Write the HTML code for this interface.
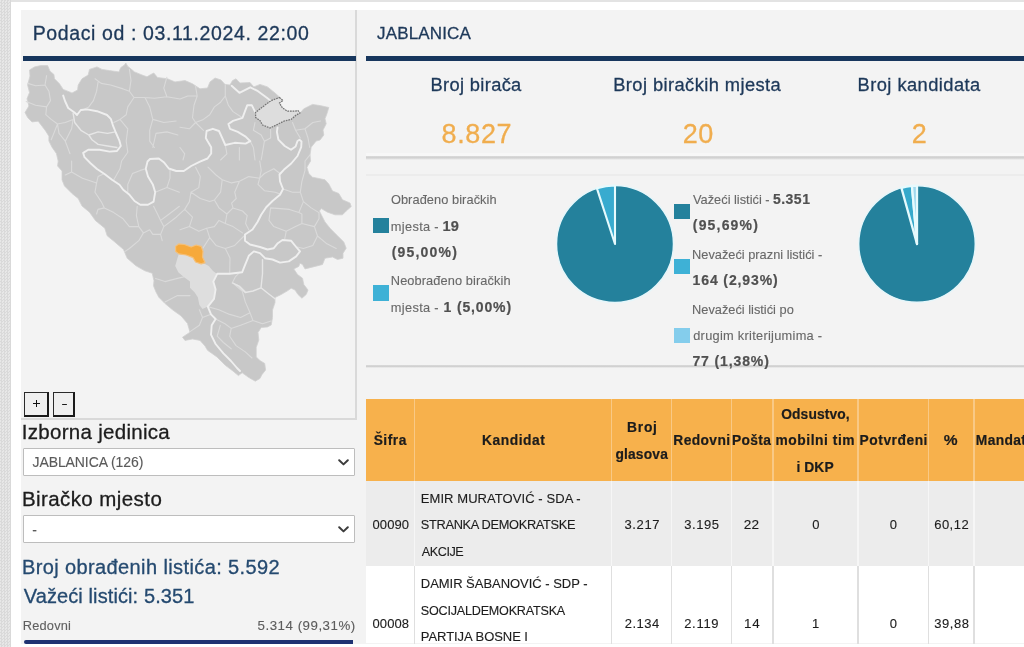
<!DOCTYPE html>
<html>
<head>
<meta charset="utf-8">
<title>Izbori - JABLANICA</title>
<style>
html,body{margin:0;padding:0;}
body{width:1024px;height:647px;overflow:hidden;position:relative;background:#e3e3e3;font-family:"Liberation Sans",sans-serif;}
.abs{position:absolute;}
.t{position:absolute;white-space:nowrap;line-height:1;font-family:"Liberation Sans",sans-serif;}
.sq{position:absolute;width:15.5px;height:15.2px;}
.btn{position:absolute;box-sizing:border-box;background:#efefef;border-style:solid;border-color:#2a2a2a #1a1a1a #1a1a1a #2a2a2a;border-width:1.6px 2.2px 2.4px 1.6px;}
.sel{position:absolute;box-sizing:border-box;left:23.2px;width:332px;background:#fff;border:1px solid #bdbdbd;border-radius:1px;}
</style>
</head>
<body>
<div class="abs" style="left:0;top:0;width:11.2px;height:647px;background:repeating-conic-gradient(#d9d9d9 0% 25%,#e7e7e7 0% 50%) 0 0/3px 3px;"></div>
<div class="abs" style="left:11.2px;top:1.5px;width:1013px;height:646px;background:#fff;"></div>
<div class="abs" style="left:20.6px;top:10.4px;width:1004px;height:633.2px;background:#f3f3f3;"></div>
<!-- left card border (right + bottom) -->
<div class="abs" style="left:354.9px;top:10.4px;width:2.3px;height:409.4px;background:#d9d9d9;"></div>
<div class="abs" style="left:20.6px;top:417.7px;width:336.6px;height:2.2px;background:#d9d9d9;"></div>
<div class="abs" style="left:23px;top:56.4px;width:332.5px;height:4.2px;background:#17365d;"></div>
<svg class="abs" style="left:20px;top:60px;filter:blur(0.45px);" width="334" height="357" viewBox="20 60 334 357">
<path d="M29.5,70 L34.5,66.9 L40.8,65.6 L47.6,65.6 L50,71.2 L53.9,74.4 L54.5,78.8 L59.5,83.8 L63.2,89.4 L69.5,91.9 L72,93 L77.6,90 L78.2,85 L82,78.8 L88.2,75 L89.5,69.4 L97,66.9 L102,69.4 L109.5,70.6 L118.9,71.9 L120.8,67.5 L124.5,65 L125.8,63 L127.6,66.2 L130.8,68.8 L134.5,71.9 L142,75 L147,76.8 L150,75 L153.8,73 L157.5,77.5 L167.5,78.8 L175,81.9 L185,80.6 L192.5,83.8 L200,88.8 L207.5,88 L210,81.9 L215,78 L221,80 L225,84.4 L230,85 L232.5,80.6 L236,78.8 L240,83 L250,82.5 L253.8,86.9 L260,84.4 L267.5,86.9 L275,93 L279.4,96.9 L283,100.6 L279.4,103 L282.5,108 L287.5,111.2 L295,111.2 L298,110.6 L300,113 L303.8,108.8 L312.5,104.4 L320,105.6 L328.8,107.5 L326.9,113.8 L325,118.8 L326.2,123.8 L323,130 L323.8,135 L320,140 L316.2,141 L311.2,147.2 L310,154.8 L310.6,161 L306.9,167.2 L308.8,173.5 L312.5,177.2 L318.8,178.5 L325,179.8 L328.8,184 L332.5,191 L338.8,193.5 L342.5,199.8 L350,203 L351.2,206.6 L346.2,211 L342.5,214.8 L335,214.8 L327.5,212.2 L321.2,208.5 L319.4,211 L321.9,216 L325,222 L330,228.2 L336.2,234.5 L343.8,242 L346.2,248.2 L343,253.2 L343,258.2 L337.5,259.5 L332.5,257 L325,258.2 L322.5,264.5 L315,266.4 L305,268.9 L302.5,264.5 L300,263.2 L298.8,266.4 L293.8,268.9 L297.5,274.5 L302.5,278.2 L303.8,284.5 L308,290 L306.2,294.5 L301.9,298.2 L298,294.5 L295,290 L291.2,288.2 L287.5,290.8 L281.2,294.5 L275,297.5 L275,302.5 L272.5,310 L272.5,317.5 L271.2,325 L267.5,326.9 L261.2,327.5 L258,332.5 L258.8,340 L256.2,347.5 L256.2,356.9 L260,360.6 L264.7,363.4 L265.6,370 L261.9,374.7 L260,378.4 L255.3,381.2 L248.8,377.5 L242.2,372.8 L238.4,375.6 L232.8,370.9 L225.3,365.3 L216.9,356.9 L207.5,350.3 L205,346 L200,340.4 L192.5,339 L185,340.4 L182.5,337.2 L190,332.2 L187.5,323.5 L181.2,316 L172.5,309.8 L165,303.5 L158.8,297.2 L156,292 L153.5,285.8 L154,280.8 L152.2,273.2 L144.8,270.8 L136,265.8 L127.2,258.2 L123.5,249.5 L114.8,242 L107.2,235.8 L104.8,228.2 L97.2,222 L95.8,221 L89.5,212.2 L82,206 L78.2,198.5 L72,193.5 L64.5,186 L62,179.8 L62,171 L57.6,166 L58.2,161 L56.4,153.5 L52,147.2 L48.9,141 L48.9,136.2 L45.8,131.2 L42,126.2 L38.2,121.2 L32,121.9 L27.6,117.5 L25,112.5 L28.9,106 L27,98.8 L29.5,92.5 L27.6,85 L30,76Z" fill="#c8c8c8" stroke="#d0d0d0" stroke-width="0.8" stroke-linejoin="round"/>
<path d="M46.6,75.6 L45,85 L48.9,91.2 L50.5,100.6 L46.6,106.9 L45.8,114.7 L51.2,119.4 L57.5,124 L54.4,131.9 L51.2,139.7 M27.8,83.4 L35.6,85.8 L45,85 M26.2,101.4 L35.6,105.3 L46.6,106.9 M57.5,124 L65.3,122.5 L73.1,119.4 M98.1,81.9 L96.6,91.2 L93.4,100.6 L88.8,106.9 L82.5,110 M95,78.8 L101.2,83.4 L110.6,85 L123.1,88.9 L129.4,91.2 L134,97.5 L145,97.5 L154.4,98.3 L166.9,96.7 L180,99 L187.8,96 L197.2,96 M129.4,69.4 L131,80.3 L129.4,91.2 M134,97.5 L127.8,106.9 L126.2,114.7 L120,119.4 L113.8,122.5 M166.9,77.2 L163.8,88.1 L166.9,96.7 M145,97.5 L149.7,106.9 L152.8,119.4 L149.7,130.3 L149.7,141.2 L154.4,147.5 M120,119.4 L127.8,128.8 L126.2,141.2 L127.8,152.2 M152.8,119.4 L163.8,122.5 L176.2,121 M156,133.4 L166.9,131.9 L177.8,135 M156,133.4 L152.8,147.5 M57.5,124 L59,133.4 L65.3,141.2 L70,153.8 M73.1,119.4 L71.6,128.8 L65.3,141.2 M195.6,86.6 L197.2,96 L194,105.3 L192.5,117.8 L195.6,122.5 L203.4,130.3 M225.3,96 L220.6,102.2 L214.4,106.9 L209.7,114.7 L203.4,119.4 L195.6,122.5 M225.3,85 L225.3,96 L228.4,105.3 L233,111.6 L242.5,117.8 M180,127.2 L189.4,128.8 L195.6,122.5 M255,122.5 L253.4,130.3 L261.2,135 L264.4,141.2 L262.8,150.6 L261.2,160 M270.6,128.8 L270.6,138 L264.4,141.2 M292.5,122.5 L295.6,130.3 L300.3,138 M295.6,130.3 L305,128.8 L312.8,122.5 L320.6,121 M305,128.8 L308,138 L309.7,147.5 M239.4,147.5 L239.4,160 M250.3,141.2 L253.4,147.5 L255,160 M225.3,145 L226.9,153.8 L220.6,160 M180,147.5 L184.7,153.8 L183,160 M71.6,161 L71.6,172 L65.3,175 M71.6,172 L82.5,178.2 L96.6,182.9 L98.1,176.6 L104.4,173.5 M96.6,182.9 L95,192.2 L101.2,201.6 L104.4,207.9 L98,209.4 L96.6,214 M104.4,207.9 L113.8,212.6 L123.1,218.8 L129.4,226.6 L138.8,226.6 L143.4,232.9 L138.8,240.7 L129.4,248.5 L124.7,251.6 M137.2,206.3 L136.4,215.7 L138.8,226.6 M153.6,206.3 L157.5,214 L160.6,220.4 L166.9,215.7 L179.4,206.3 M160.6,220.4 L163.8,226.6 L160.6,234.4 L162.2,240.7 M143.4,232.9 L149.7,229.8 L152.8,234.4 L160.6,234.4 M132.5,173.5 L127.8,184.4 L127.8,192.2 M132.5,173.5 L140.3,170.4 L145.8,168.8 M155.2,192.2 L166.9,187.6 L179.4,192.2 M166.9,187.6 L170,178.2 L170,168.8 M163.8,226.6 L176.2,217.2 L184.7,209.4 M121.6,161 L120,168.8 L113.8,179.8 M127.8,152.2 L121.6,161 M195.6,167.2 L200.3,176.6 L198.8,187.6 L191,192.2 L189.4,201.6 L184.7,209.4 L192.5,217.2 L189.4,226.6 L180,229.8 M208,167.2 L216,175 L222.2,179.8 L220.6,192.2 L214.4,200 L209.7,201.6 L200.3,198.5 L191,192.2 M222.2,179.8 L231.6,182.9 L239.4,181.3 L248.8,176.6 L259.7,178.2 L264.4,173.5 L273.8,168.8 L280,173.5 M259.7,161 L261.2,170.4 L259.7,178.2 L258,184.4 L264.4,190.7 L275.3,192.2 L280,194 M239.4,181.3 L234.7,192.2 L236.2,198.5 L231.6,203.2 L233,207.9 L242.5,211 L247.2,215.7 L245.6,223.5 L248.8,229.8 M214.4,200 L219,207.9 L226.9,214 L233,207.9 M226.9,214 L225.3,223.5 L219,220.4 L214.4,226.6 L206.6,228.2 L198.8,231.3 L189.4,226.6 M225.3,223.5 L233,226.6 L242.5,232.9 M206.6,228.2 L209.7,237.6 L216,245.4 L225.3,248.5 L234.7,245.4 L244,236 M225.3,248.5 L230,257.9 L229.7,273 M203,248 L209.7,237.6 M305,161 L305,170.4 L301.9,181.3 L300.3,192.2 L303.4,201.6 L311.2,207.9 L319,212.6 M283,189 L292.5,192.2 L300.3,192.2 M289.4,209.4 L298.8,212.6 L303.4,201.6 M289.4,209.4 L270.6,207.9 L269,220.4 L273.8,226.6 L286.2,231.3 L295.6,226.6 L301.9,223.5 L301.9,214 L298.8,212.6 M301.9,223.5 L314.4,226.6 L319,218.8 L319,212.6 M314.4,226.6 L317.5,236 L312.8,245.4 L303.4,248.5 L297.2,247 M286.2,231.3 L284.7,239 M317.5,236 L326.9,243.8 L336.2,248.5 M310,154.8 L305,161 M155.6,278.4 L165,281.6 L177.5,278.4 L183.8,276.9 M165,301.9 L177.5,295.6 L190,295.6 M199.4,309.7 L202.5,317.5 L199.4,325.3 L190,331.6 M202.5,317.5 L210.3,314.4 M232.2,283 L240,286.2 L246.2,292.5 M232.2,283 L235.3,276.9 L240,272.2 M232.8,283 L242.2,291 L245.3,301.9 L250,312.8 L253,320.6 L262.5,323.8 L271,321 M207.8,306.6 L218.8,309.7 L229.7,314.4 L240.6,317.5 L250,312.8 M215.6,319 L225,323.8 L231.2,328.4 L229.7,336.2 L236,345.6 L245.3,351.9 L252,358 M231.2,328.4 L240.6,325.3 L253,320.6 M220.3,325.3 L217.2,336.2 L223.4,342.5 L231.2,348.8" fill="none" stroke="#dadada" stroke-width="1.1" stroke-linejoin="round" stroke-linecap="round"/>
<path d="M175.2,266 L177.5,258 L178.8,253.9 L186.2,255 L193,257.6 L195.6,262 L201.2,263.9 L205,263.9 L208.8,266 L213,271 L216.8,273.8 L213.3,281.6 L215.6,289.4 L214,298.8 L207.8,306.6 L202.5,309 L199.4,305 L197.8,297.2 L194.7,292.5 L190,287.8 L190,281.6 L183.8,276.9 L178.3,272.2Z" fill="#dedede"/>
<path d="M73.1,113.1 L74.7,122.5 L80.9,130.3 L88.8,135 L91.9,139.7 L98.1,144.4 L107.5,146 L116.9,147.5 M88.8,135 L98.1,131.9 L107.5,133.4 L115.3,131.9 M262.5,259.7 L262.5,273.8 L261,287.8 L253,291 L245.3,292.5 L239,286.2 L232.8,283 M261,287.8 L268.8,294 L275,298.8" fill="none" stroke="#e6e6e6" stroke-width="1.4" stroke-linejoin="round" stroke-linecap="round"/>
<path d="M63.2,95.6 L65,101 L68.2,108 L74.5,112.5 L77,115 L80.8,110 L87,109.4 L97,111.2 L107,115 L110.8,118.8 L113.2,126.2 L115.8,132.5 L119.5,140.9 L120.8,146 L117,151 L109.5,151.6 L99.5,149.8 L88.2,149.8 L83.2,152.9 L84.5,157.2 L90.8,163.5 L97,169 L104.5,174 L112,179.8 L119.5,184.8 L123.2,189.8 L129.5,194.8 L134.5,201 L140.3,204.8 L148,204.8 L153.6,201.6 L155.2,192.2 L152.8,184.4 L148,176.6 L145.8,168.8 L147.5,161.5 L150,159 L158.8,158.5 L163.8,162.2 L168.8,168.5 L176.2,171 L183.8,171 L191.2,166 L200,161.6 L207.5,158.5 L211.2,153.5 L211.2,147.2 L207.5,141 L205.8,138 L206.6,131 L212.8,128.8 L219,131 L222.2,138 L225.3,145 L234.7,142.8 L245.6,143.6 L250.3,141.2 L245.6,136.6 L237.8,131.9 L230,128.8 L228.4,124 L233,120.9 L242.5,117.8 L244.8,111.6 L247.2,105.3 L251.9,105.3 L255,111.6 M231.6,85.8 L239.4,92.8 L250.3,87.3 L258,91.2 L267.5,98.3 L271.4,101.4 M277.5,127.5 L276.9,131.9 L278.4,139.7 L284.7,146 L291,149.8 L295.6,146.5 L297.5,141 L299.5,139.8 L301.5,141.5 L301.2,147.2 L297.5,156 L291.2,163.5 L283.8,169.8 L279.5,174.5 L280,181.3 L283,189 L280,194.8 L272.5,201 L266.2,207.2 L261.2,214.8 L257.5,222 L252.5,229.5 L245,234.5 L245,240.8 L250,244.5 L260,247 L267.5,249.5 L273.8,248.2 L277.8,243.2 L282.5,240 L291.2,240.8 L296.2,247 L300,251.4 L296.2,256.4 L288.8,261.4 L280,262.6 L272.5,259.5 L265,258.2 L260,253.2 L253.8,251.4 L248.8,255.8 L245.3,264.4 L242.2,272.2 L229.7,273.8 L217.2,273.8 L213.3,281.6 L215.6,289.4 L214,298.8 L207.8,306.6 L211,314.4 L215.6,319 L211.7,325.3 L211,334.7 L215.6,344 L223.4,353.4 L231,361 L237,368 L240,371" fill="none" stroke="#efefef" stroke-width="1.9" stroke-linejoin="round" stroke-linecap="round"/>
<path d="M175.6,246.4 L178.8,243.9 L184.4,244.5 L191.2,247 L196.2,245 L201.2,246.4 L203,251.4 L202.5,257 L205,262.6 L201.2,263.9 L195.6,262 L193,257.6 L186.2,255 L178.8,253.9 L175.6,251.4Z" fill="#f6a93b" stroke="#f5c07a" stroke-width="1.2" stroke-linejoin="round"/>
<path d="M279.4,97.5 L283,100.6 L279.4,103 L282.5,108 L287.5,111.2 L295,111.2 L298,110.6 L300,113 L296.2,115 L291.2,119.4 L283.8,121.2 L277.5,124.4 L270,128 L262.5,125 L260,120.6 L255.6,117.5 L255.6,112.5 L262.5,106.9 L271.2,100.6Z" fill="#dddddd" stroke="#767676" stroke-width="1.25" stroke-dasharray="1.7,0.9" stroke-linejoin="round"/>
</svg>
<div class="btn" style="left:24.3px;top:391.6px;width:24.3px;height:25.2px;"></div>
<div class="btn" style="left:53.1px;top:391.6px;width:21.9px;height:25.2px;"></div>
<div class="abs" style="left:32.7px;top:403px;width:7.5px;height:1.3px;background:#111;"></div>
<div class="abs" style="left:35.8px;top:399.9px;width:1.3px;height:7.5px;background:#111;"></div>
<div class="abs" style="left:62.1px;top:403.8px;width:4.8px;height:1.5px;background:#1a1a1a;border-radius:0.7px;"></div>
<div class="sel" style="top:447.5px;height:28.2px;"><svg width="11" height="7" viewBox="0 0 11 7" style="position:absolute;right:5.5px;top:10.5px;"><path d="M1.2 1.2 L5.5 5.4 L9.8 1.2" fill="none" stroke="#3c3c3c" stroke-width="2" stroke-linecap="round" stroke-linejoin="round"/></svg></div>
<div class="sel" style="top:514.6px;height:28.6px;"><svg width="11" height="7" viewBox="0 0 11 7" style="position:absolute;right:5.5px;top:10.5px;"><path d="M1.2 1.2 L5.5 5.4 L9.8 1.2" fill="none" stroke="#3c3c3c" stroke-width="2" stroke-linecap="round" stroke-linejoin="round"/></svg></div>
<div class="abs" style="left:23.5px;top:639.7px;width:329.5px;height:4.1px;background:#1f3272;border-radius:2.5px 0 0 2.5px;"></div>

<!-- right panel -->
<div class="abs" style="left:366px;top:56.4px;width:658px;height:4.2px;background:#17365d;"></div>
<div class="abs" style="left:366.3px;top:152.6px;width:658px;height:3px;background:#f7f7f7;"></div>
<div class="abs" style="left:366.3px;top:155.5px;width:658px;height:4.8px;background:linear-gradient(#dedede 0%,#cfcfcf 30%,#d6d6d6 55%,#f3f3f3 100%);"></div>
<div class="abs" style="left:366.3px;top:174px;width:658px;height:1.6px;background:#ececec;"></div>
<div class="abs" style="left:366.3px;top:365.3px;width:658px;height:3px;background:linear-gradient(#dcdcdc 0%,#cdcdcd 45%,#f3f3f3 100%);"></div>

<div class="sq" style="left:373px;top:218px;background:#24819c;"></div>
<div class="sq" style="left:373px;top:285.4px;background:#3eb1d6;"></div>
<div class="sq" style="left:674.3px;top:204.2px;background:#24819c;"></div>
<div class="sq" style="left:674.3px;top:259px;background:#3eb1d6;"></div>
<div class="sq" style="left:674.3px;top:328px;background:#84cdec;"></div>

<svg class="abs" style="left:554.5px;top:184.4px;" width="120" height="120" viewBox="-60 -60 120 120">
<circle r="58.5" fill="#24819c" stroke="#e6f6fa" stroke-width="1.5"/>
<path d="M0,0 L0,-58.5 A58.5,58.5 0 0 0 -18.08,-55.64 Z" fill="#38abcf" stroke="#e6fafd" stroke-width="2.1" stroke-linejoin="round"/>
</svg>
<svg class="abs" style="left:856.75px;top:184.4px;" width="120" height="120" viewBox="-60 -60 120 120">
<circle r="58.3" fill="#24819c" stroke="#e6f6fa" stroke-width="1.5"/>
<path d="M0,0 L-5.05,-58.08 A58.3,58.3 0 0 0 -15.6,-56.17 Z" fill="#36a9cb" stroke="#e6fafd" stroke-width="2.3" stroke-linejoin="round"/>
<path d="M0,0 L0,-58.3 A58.3,58.3 0 0 0 -5.05,-58.08 Z" fill="#9fd8ee" stroke="#e6fafd" stroke-width="2.3" stroke-linejoin="round"/>
</svg>

<!-- table -->
<div class="abs" style="left:366.2px;top:399.1px;width:660px;height:82.2px;background:#f7b14c;"></div>
<div class="abs" style="left:366.2px;top:481.3px;width:660px;height:85.1px;background:#ececec;"></div>
<div class="abs" style="left:366.2px;top:566.4px;width:660px;height:77.1px;background:#fff;"></div>
<div class="abs" style="left:413.85px;top:399.1px;width:1.3px;height:82.2px;background:#f9c985;"></div><div class="abs" style="left:413.85px;top:481.3px;width:1.3px;height:85.1px;background:#f6f6f6;"></div><div class="abs" style="left:413.9px;top:566.4px;width:1.2px;height:77.2px;background:#dfdfdf;"></div><div class="abs" style="left:610.6px;top:399.1px;width:1.3px;height:82.2px;background:#f9c985;"></div><div class="abs" style="left:610.6px;top:481.3px;width:1.3px;height:85.1px;background:#f6f6f6;"></div><div class="abs" style="left:610.65px;top:566.4px;width:1.2px;height:77.2px;background:#dfdfdf;"></div><div class="abs" style="left:670.6px;top:399.1px;width:1.3px;height:82.2px;background:#f9c985;"></div><div class="abs" style="left:670.6px;top:481.3px;width:1.3px;height:85.1px;background:#f6f6f6;"></div><div class="abs" style="left:670.65px;top:566.4px;width:1.2px;height:77.2px;background:#dfdfdf;"></div><div class="abs" style="left:730.6px;top:399.1px;width:1.3px;height:82.2px;background:#f9c985;"></div><div class="abs" style="left:730.6px;top:481.3px;width:1.3px;height:85.1px;background:#f6f6f6;"></div><div class="abs" style="left:730.65px;top:566.4px;width:1.2px;height:77.2px;background:#dfdfdf;"></div><div class="abs" style="left:772.35px;top:399.1px;width:1.3px;height:82.2px;background:#f9c985;"></div><div class="abs" style="left:772.35px;top:481.3px;width:1.3px;height:85.1px;background:#f6f6f6;"></div><div class="abs" style="left:772.4px;top:566.4px;width:1.2px;height:77.2px;background:#dfdfdf;"></div><div class="abs" style="left:857.35px;top:399.1px;width:1.3px;height:82.2px;background:#f9c985;"></div><div class="abs" style="left:857.35px;top:481.3px;width:1.3px;height:85.1px;background:#f6f6f6;"></div><div class="abs" style="left:857.4px;top:566.4px;width:1.2px;height:77.2px;background:#dfdfdf;"></div><div class="abs" style="left:928.1px;top:399.1px;width:1.3px;height:82.2px;background:#f9c985;"></div><div class="abs" style="left:928.1px;top:481.3px;width:1.3px;height:85.1px;background:#f6f6f6;"></div><div class="abs" style="left:928.15px;top:566.4px;width:1.2px;height:77.2px;background:#dfdfdf;"></div><div class="abs" style="left:973.35px;top:399.1px;width:1.3px;height:82.2px;background:#f9c985;"></div><div class="abs" style="left:973.35px;top:481.3px;width:1.3px;height:85.1px;background:#f6f6f6;"></div><div class="abs" style="left:973.4px;top:566.4px;width:1.2px;height:77.2px;background:#dfdfdf;"></div>
<div class="abs" style="left:11.2px;top:643.6px;width:1013px;height:4px;background:#fff;"></div>

<div id="txt" style="position:absolute;left:0;top:0;width:1024px;height:647px;filter:blur(0.35px);">
<div class="t" style="left:32.69px;top:23.7px;font-size:19.5px;color:#1d3859;letter-spacing:0.62px;-webkit-text-stroke:0.3px #1d3859;">Podaci od : 03.11.2024. 22:00</div>
<div class="t" style="left:21.83px;top:421.75px;font-size:20.5px;color:#1c1c1c;letter-spacing:0.29px;-webkit-text-stroke:0.3px #1c1c1c;">Izborna jedinica</div>
<div class="t" style="left:32.5px;top:455px;font-size:14px;color:#5a5a5a;letter-spacing:-0.09px;-webkit-text-stroke:0.12px #5a5a5a;">JABLANICA (126)</div>
<div class="t" style="left:21.9px;top:489.25px;font-size:20.5px;color:#1c1c1c;letter-spacing:0.42px;-webkit-text-stroke:0.3px #1c1c1c;">Biračko mjesto</div>
<div class="t" style="left:32.17px;top:522.5px;font-size:14px;color:#5a5a5a;-webkit-text-stroke:0.12px #5a5a5a;">-</div>
<div class="t" style="left:21.92px;top:557.25px;font-size:20px;color:#254a70;letter-spacing:0.39px;-webkit-text-stroke:0.3px #254a70;">Broj obrađenih listića: 5.592</div>
<div class="t" style="left:23.77px;top:586px;font-size:20px;color:#254a70;letter-spacing:0.1px;-webkit-text-stroke:0.3px #254a70;">Važeći listići: 5.351</div>
<div class="t" style="left:22.8px;top:620px;font-size:12.8px;color:#606060;letter-spacing:0.2px;-webkit-text-stroke:0.12px #606060;">Redovni</div>
<div class="t" style="left:257.62px;top:619px;font-size:13.3px;color:#5c5c5c;letter-spacing:0.51px;-webkit-text-stroke:0.12px #5c5c5c;">5.314 (99,31%)</div>
<div class="t" style="left:377px;top:24.75px;font-size:17px;color:#1d3859;letter-spacing:0.16px;-webkit-text-stroke:0.3px #1d3859;">JABLANICA</div>
<div class="t" style="left:430.6px;top:76.25px;font-size:18.3px;color:#1d3859;letter-spacing:0.33px;-webkit-text-stroke:0.3px #1d3859;">Broj birača</div>
<div class="t" style="left:441.52px;top:120.8px;font-size:27px;color:#f0ad4e;letter-spacing:0.63px;-webkit-text-stroke:0.3px #f0ad4e;">8.827</div>
<div class="t" style="left:613.25px;top:76.25px;font-size:18.3px;color:#1d3859;letter-spacing:0.42px;-webkit-text-stroke:0.3px #1d3859;">Broj biračkih mjesta</div>
<div class="t" style="left:682.76px;top:120.8px;font-size:27px;color:#f0ad4e;letter-spacing:0.39px;-webkit-text-stroke:0.3px #f0ad4e;">20</div>
<div class="t" style="left:857.6px;top:76.25px;font-size:18.3px;color:#1d3859;letter-spacing:0.44px;-webkit-text-stroke:0.3px #1d3859;">Broj kandidata</div>
<div class="t" style="left:911.71px;top:120.8px;font-size:27px;color:#f0ad4e;-webkit-text-stroke:0.3px #f0ad4e;">2</div>
<div class="t" style="left:390.92px;top:194.4px;font-size:12.8px;color:#686868;letter-spacing:0.07px;-webkit-text-stroke:0.12px #686868;">Obrađeno biračkih</div>
<div class="t" style="left:390.84px;top:220.6px;font-size:12.8px;color:#686868;letter-spacing:0.32px;-webkit-text-stroke:0.12px #686868;">mjesta -</div>
<div class="t" style="left:442.57px;top:218.6px;font-size:14.6px;color:#505050;font-weight:700;-webkit-text-stroke:0.2px #505050;">19</div>
<div class="t" style="left:391.63px;top:244.9px;font-size:14px;color:#505050;font-weight:700;letter-spacing:1.2px;-webkit-text-stroke:0.2px #505050;">(95,00%)</div>
<div class="t" style="left:390.8px;top:275.4px;font-size:12.8px;color:#686868;letter-spacing:0.09px;-webkit-text-stroke:0.12px #686868;">Neobrađeno biračkih</div>
<div class="t" style="left:390.84px;top:301.7px;font-size:12.8px;color:#686868;letter-spacing:0.32px;-webkit-text-stroke:0.12px #686868;">mjesta -</div>
<div class="t" style="left:443.59px;top:299.7px;font-size:14px;color:#505050;font-weight:700;letter-spacing:0.85px;-webkit-text-stroke:0.2px #505050;">1 (5,00%)</div>
<div class="t" style="left:693.02px;top:194.1px;font-size:12.8px;color:#686868;-webkit-text-stroke:0.12px #686868;">Važeći listići -</div>
<div class="t" style="left:772.92px;top:192.1px;font-size:14px;color:#505050;font-weight:700;letter-spacing:0.5px;-webkit-text-stroke:0.2px #505050;">5.351</div>
<div class="t" style="left:692.83px;top:218.3px;font-size:14px;color:#505050;font-weight:700;letter-spacing:1.17px;-webkit-text-stroke:0.2px #505050;">(95,69%)</div>
<div class="t" style="left:692.05px;top:248.9px;font-size:12.8px;color:#686868;-webkit-text-stroke:0.12px #686868;">Nevažeći prazni listići -</div>
<div class="t" style="left:692.59px;top:273.2px;font-size:14px;color:#505050;font-weight:700;letter-spacing:0.88px;-webkit-text-stroke:0.2px #505050;">164 (2,93%)</div>
<div class="t" style="left:692.05px;top:303.7px;font-size:12.8px;color:#686868;-webkit-text-stroke:0.12px #686868;">Nevažeći listići po</div>
<div class="t" style="left:693.2px;top:330.1px;font-size:12.8px;color:#686868;letter-spacing:0.28px;-webkit-text-stroke:0.12px #686868;">drugim kriterijumima -</div>
<div class="t" style="left:692.38px;top:354.4px;font-size:14px;color:#505050;font-weight:700;letter-spacing:0.89px;-webkit-text-stroke:0.2px #505050;">77 (1,38%)</div>
<div class="t" style="left:373.67px;top:434.3px;font-size:13.8px;color:#1c1c1c;font-weight:700;letter-spacing:0.5px;-webkit-text-stroke:0.2px #1c1c1c;">Šifra</div>
<div class="t" style="left:482.07px;top:434.3px;font-size:13.8px;color:#1c1c1c;font-weight:700;letter-spacing:0.52px;-webkit-text-stroke:0.2px #1c1c1c;">Kandidat</div>
<div class="t" style="left:627.07px;top:421.3px;font-size:13.8px;color:#1c1c1c;font-weight:700;letter-spacing:0.76px;-webkit-text-stroke:0.2px #1c1c1c;">Broj</div>
<div class="t" style="left:615.43px;top:447.7px;font-size:13.8px;color:#1c1c1c;font-weight:700;letter-spacing:0.17px;-webkit-text-stroke:0.2px #1c1c1c;">glasova</div>
<div class="t" style="left:673.32px;top:434.3px;font-size:13.8px;color:#1c1c1c;font-weight:700;letter-spacing:0.39px;-webkit-text-stroke:0.2px #1c1c1c;">Redovni</div>
<div class="t" style="left:732.07px;top:434.3px;font-size:13.8px;color:#1c1c1c;font-weight:700;letter-spacing:0.33px;-webkit-text-stroke:0.2px #1c1c1c;">Pošta</div>
<div class="t" style="left:781.19px;top:407.9px;font-size:13.8px;color:#1c1c1c;font-weight:700;letter-spacing:0.12px;-webkit-text-stroke:0.2px #1c1c1c;">Odsustvo,</div>
<div class="t" style="left:775.57px;top:434.3px;font-size:13.8px;color:#1c1c1c;font-weight:700;letter-spacing:0.54px;-webkit-text-stroke:0.2px #1c1c1c;">mobilni tim</div>
<div class="t" style="left:796.56px;top:460.8px;font-size:13.8px;color:#1c1c1c;font-weight:700;letter-spacing:0.06px;-webkit-text-stroke:0.2px #1c1c1c;">i DKP</div>
<div class="t" style="left:859.57px;top:434.3px;font-size:13.8px;color:#1c1c1c;font-weight:700;letter-spacing:0.53px;-webkit-text-stroke:0.2px #1c1c1c;">Potvrđeni</div>
<div class="t" style="left:943.75px;top:432.3px;font-size:15.5px;color:#1c1c1c;font-weight:700;-webkit-text-stroke:0.2px #1c1c1c;">%</div>
<div class="t" style="left:975.82px;top:434.3px;font-size:13.8px;color:#1c1c1c;font-weight:700;letter-spacing:0.36px;-webkit-text-stroke:0.2px #1c1c1c;">Mandat</div>
<div class="t" style="left:372.5px;top:518px;font-size:13px;color:#1c1c1c;letter-spacing:0.1px;-webkit-text-stroke:0.12px #1c1c1c;">00090</div>
<div class="t" style="left:420.79px;top:492px;font-size:13px;color:#1c1c1c;letter-spacing:0.07px;-webkit-text-stroke:0.12px #1c1c1c;">EMIR MURATOVIĆ - SDA -</div>
<div class="t" style="left:420.83px;top:519.3px;font-size:12.8px;color:#1c1c1c;letter-spacing:-0.32px;-webkit-text-stroke:0.12px #1c1c1c;">STRANKA DEMOKRATSKE</div>
<div class="t" style="left:421.77px;top:545.5px;font-size:12.6px;color:#1c1c1c;letter-spacing:-0.42px;-webkit-text-stroke:0.12px #1c1c1c;">AKCIJE</div>
<div class="t" style="left:624.43px;top:518px;font-size:13px;color:#1c1c1c;letter-spacing:0.64px;-webkit-text-stroke:0.12px #1c1c1c;">3.217</div>
<div class="t" style="left:684.13px;top:518px;font-size:13px;color:#1c1c1c;letter-spacing:0.59px;-webkit-text-stroke:0.12px #1c1c1c;">3.195</div>
<div class="t" style="left:743.84px;top:518px;font-size:13.6px;color:#1c1c1c;-webkit-text-stroke:0.12px #1c1c1c;">22</div>
<div class="t" style="left:812.2px;top:518px;font-size:13px;color:#1c1c1c;-webkit-text-stroke:0.12px #1c1c1c;">0</div>
<div class="t" style="left:889.7px;top:518px;font-size:13px;color:#1c1c1c;-webkit-text-stroke:0.12px #1c1c1c;">0</div>
<div class="t" style="left:934.16px;top:518px;font-size:13px;color:#1c1c1c;letter-spacing:0.5px;-webkit-text-stroke:0.12px #1c1c1c;">60,12</div>
<div class="t" style="left:372.5px;top:616.6px;font-size:13px;color:#1c1c1c;letter-spacing:0.11px;-webkit-text-stroke:0.12px #1c1c1c;">00008</div>
<div class="t" style="left:420.79px;top:577px;font-size:13px;color:#1c1c1c;letter-spacing:-0.03px;-webkit-text-stroke:0.12px #1c1c1c;">DAMIR ŠABANOVIĆ - SDP -</div>
<div class="t" style="left:420.83px;top:604.5px;font-size:12.6px;color:#1c1c1c;letter-spacing:-0.22px;-webkit-text-stroke:0.12px #1c1c1c;">SOCIJALDEMOKRATSKA</div>
<div class="t" style="left:420.79px;top:629.6px;font-size:13px;color:#1c1c1c;letter-spacing:-0.05px;-webkit-text-stroke:0.12px #1c1c1c;">PARTIJA BOSNE I</div>
<div class="t" style="left:624.66px;top:616.6px;font-size:13px;color:#1c1c1c;letter-spacing:0.51px;-webkit-text-stroke:0.12px #1c1c1c;">2.134</div>
<div class="t" style="left:684.16px;top:616.6px;font-size:13px;color:#1c1c1c;letter-spacing:0.71px;-webkit-text-stroke:0.12px #1c1c1c;">2.119</div>
<div class="t" style="left:744.05px;top:616.6px;font-size:13.4px;color:#1c1c1c;letter-spacing:0.66px;-webkit-text-stroke:0.12px #1c1c1c;">14</div>
<div class="t" style="left:812.06px;top:616.6px;font-size:13px;color:#1c1c1c;-webkit-text-stroke:0.12px #1c1c1c;">1</div>
<div class="t" style="left:889.7px;top:616.6px;font-size:13px;color:#1c1c1c;-webkit-text-stroke:0.12px #1c1c1c;">0</div>
<div class="t" style="left:934.33px;top:616.6px;font-size:13px;color:#1c1c1c;letter-spacing:0.5px;-webkit-text-stroke:0.12px #1c1c1c;">39,88</div>
</div>
</body>
</html>
